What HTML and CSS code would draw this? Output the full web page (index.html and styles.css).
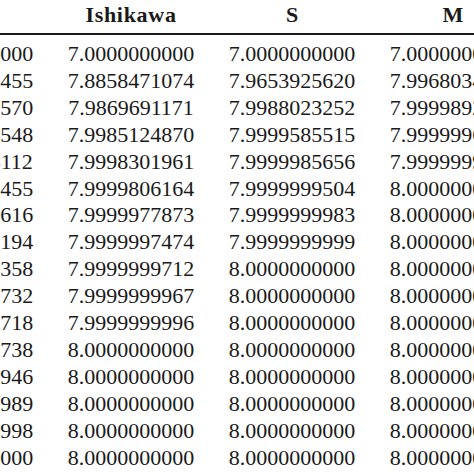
FILE: index.html
```html
<!DOCTYPE html>
<html>
<head>
<meta charset="utf-8">
<link rel="stylesheet" href="styles.css">
</head>
<body>
<div class="table">
  <div class="row head">
    <div>N</div><div class="ishi">Ishikawa</div><div>S</div><div>M</div>
  </div>
  <div class="body">
    <div class="row"><div>7.0000000000</div><div>7.0000000000</div><div>7.0000000000</div><div>7.0000000000</div></div>
    <div class="row"><div>7.6942148455</div><div>7.8858471074</div><div>7.9653925620</div><div>7.9968034506</div></div>
    <div class="row"><div>7.9047720570</div><div>7.9869691171</div><div>7.9988023252</div><div>7.9999892215</div></div>
    <div class="row"><div>7.9714392548</div><div>7.9985124870</div><div>7.9999585515</div><div>7.9999996334</div></div>
    <div class="row"><div>7.9913458112</div><div>7.9998301961</div><div>7.9999985656</div><div>7.9999999875</div></div>
    <div class="row"><div>7.9973847455</div><div>7.9999806164</div><div>7.9999999504</div><div>8.0000000000</div></div>
    <div class="row"><div>7.9992099616</div><div>7.9999977873</div><div>7.9999999983</div><div>8.0000000000</div></div>
    <div class="row"><div>7.9997612194</div><div>7.9999997474</div><div>7.9999999999</div><div>8.0000000000</div></div>
    <div class="row"><div>7.9999278358</div><div>7.9999999712</div><div>8.0000000000</div><div>8.0000000000</div></div>
    <div class="row"><div>7.9999781732</div><div>7.9999999967</div><div>8.0000000000</div><div>8.0000000000</div></div>
    <div class="row"><div>7.9999933718</div><div>7.9999999996</div><div>8.0000000000</div><div>8.0000000000</div></div>
    <div class="row"><div>7.9999979738</div><div>8.0000000000</div><div>8.0000000000</div><div>8.0000000000</div></div>
    <div class="row"><div>7.9999993946</div><div>8.0000000000</div><div>8.0000000000</div><div>8.0000000000</div></div>
    <div class="row"><div>7.9999998989</div><div>8.0000000000</div><div>8.0000000000</div><div>8.0000000000</div></div>
    <div class="row"><div>7.9999999998</div><div>8.0000000000</div><div>8.0000000000</div><div>8.0000000000</div></div>
    <div class="row"><div>8.0000000000</div><div>8.0000000000</div><div>8.0000000000</div><div>8.0000000000</div></div>
  </div>
</div>
</body>
</html>
```
FILE: styles.css
```css
html, body {
  margin: 0;
  padding: 0;
  background: #ffffff;
  overflow: hidden;
}
body {
  width: 474px;
  height: 474px;
  font-family: "Liberation Serif", "Times New Roman", serif;
  font-size: 22px;
  color: #1a1a1a;
}
.table {
  width: 644px;
  margin-left: -110.5px;
}
.row {
  display: grid;
  grid-template-columns: repeat(4, 161px);
  text-align: center;
  white-space: nowrap;
}
.head {
  font-weight: bold;
  line-height: 27px;
  padding-top: 1px;
  padding-bottom: 5px;
  border-bottom: 2px solid #1a1a1a;
}
.ishi {
  letter-spacing: 0.7px;
}
.body {
  padding-top: 6px;
  line-height: 26.9px;
}
```
